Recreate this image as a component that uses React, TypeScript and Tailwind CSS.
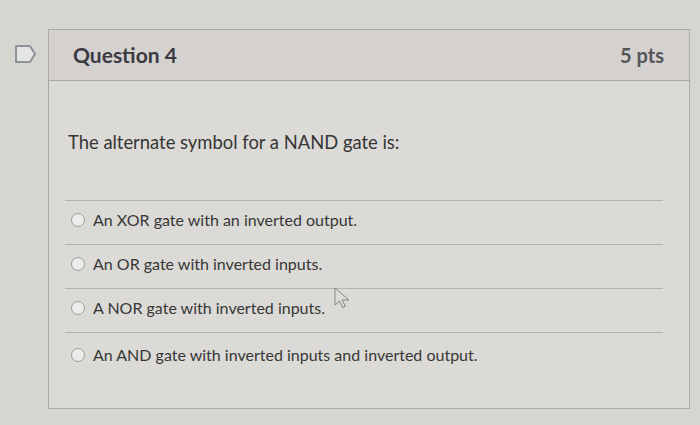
const options = [
  "An XOR gate with an inverted output.",
  "An OR gate with inverted inputs.",
  "A NOR gate with inverted inputs.",
  "An AND gate with inverted inputs and inverted output.",
];

function FlagIcon() {
  return (
    <svg width="24" height="20" viewBox="0 0 24 20" fill="none">
      <path
        d="M2 2h14l5 8-5 8H2z"
        stroke="#8c929c"
        strokeWidth="2"
        strokeLinejoin="round"
        fill="#e4e4e2"
      />
    </svg>
  );
}

function Cursor() {
  return (
    <svg className="absolute left-[268px] top-[-3px]" width="20" height="26" viewBox="0 0 20 26" fill="none">
      <path d="M2 2v17l4.5-4 3 6.5 2.8-1.3-3-6.2H16z" stroke="#858585" strokeWidth="1" fill="#dcdcd8" />
    </svg>
  );
}

export default function App() {
  return (
    <div className="h-[425px] w-[700px] bg-[#d6d6d1] pt-[29px] font-['Lato','Liberation_Sans',sans-serif]">
      <div className="relative ml-[48px] w-[642px]">
        <div className="absolute left-[-34px] top-[15px]">
          <FlagIcon />
        </div>
        <div className="border border-[#a9a9a7] bg-[#dbdad6]">
          {/* header */}
          <div className="flex h-[51px] items-center justify-between border-b border-[#a9a9a7] bg-[#d4d1ce] pl-[24px] pr-[25px]">
            <span className="text-[21px] font-bold text-[#3b3b44]">Question 4</span>
            <span className="text-[20px] font-bold text-[#55555a]">5 pts</span>
          </div>

          {/* body */}
          <div className="px-[16px] pr-[26px] pb-[26px] pt-[49px]">
            <p className="mb-[45px] pl-[3px] text-[18.4px] leading-[25px] text-[#353535]">
              The alternate symbol for a NAND gate is:
            </p>
            <div>
              {options.map((opt, i) => (
                <div
                  key={opt}
                  className={`relative flex h-[44px] items-center gap-[8px] border-t border-[#b3b3b0] pb-[6px] pl-[6px] ${
                    i === options.length - 1 ? "h-[50px]" : ""
                  }`}
                >
                  <span className="h-[14px] w-[14px] rounded-full border border-[#9c9c9c] bg-[#ececea]" />
                  <span className="text-[16px] text-[#373737]">{opt}</span>
                  {i === 2 && <Cursor />}
                </div>
              ))}
            </div>
          </div>
        </div>
      </div>
    </div>
  );
}
